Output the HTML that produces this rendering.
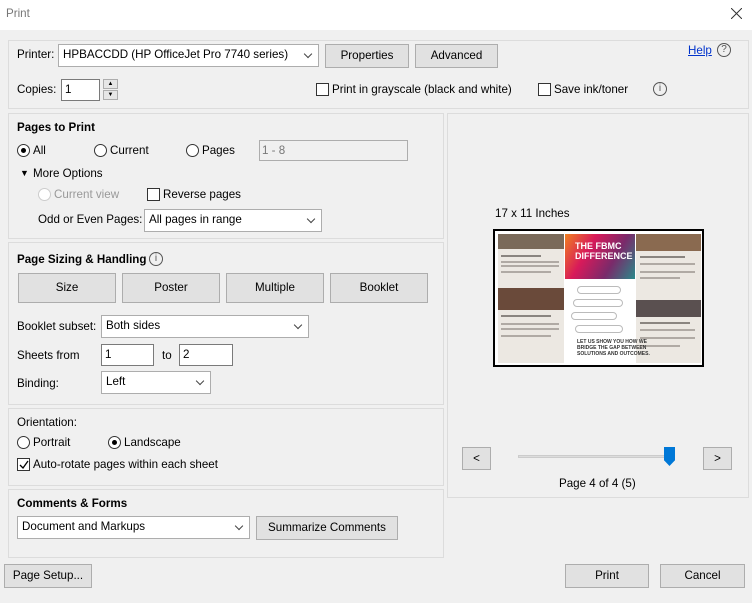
<!DOCTYPE html><html><head><style>
*{box-sizing:border-box}
body{margin:0;width:752px;height:603px;background:#f0f0f0;font-family:"Liberation Sans",Arial,sans-serif;font-size:11.6px;color:#000;position:relative;overflow:hidden}
.a{position:absolute;white-space:nowrap}
.tb{position:absolute;left:0;top:0;width:752px;height:30px;background:#fff}
.p{position:absolute;border:1px solid #dcdcdc}
.btn{position:absolute;background:#e1e1e1;border:1px solid #adadad;text-align:center;line-height:22px}
.inp{position:absolute;background:#fff;border:1px solid #7a7a7a;padding-left:3px;line-height:20px}
.sel{position:absolute;background:#fff;border:1px solid #adadad;padding-left:4px;line-height:20px}
.sel:after{content:"";position:absolute;right:7px;top:6px;width:5px;height:5px;border-right:1px solid #444;border-bottom:1px solid #444;transform:rotate(45deg)}
.cb{position:absolute;width:13px;height:13px;border:1px solid #333;background:#fff}
.rd{position:absolute;width:13px;height:13px;border:1px solid #333;border-radius:50%;background:#fff}
.rd.on:after{content:"";position:absolute;left:3px;top:3px;width:5px;height:5px;border-radius:50%;background:#000}
b{font-weight:bold}
.ln{position:absolute;height:2px;background:#8a8580}
</style></head><body>
<div class="tb"></div>
<div class="a" style="left:6px;top:7px;color:#777">Print</div>
<svg class="a" style="left:731px;top:8px" width="11" height="11"><path d="M0 0L11 11M11 0L0 11" stroke="#333" stroke-width="1"/></svg>

<div class="p" style="left:8px;top:40px;width:741px;height:69px"></div>
<div class="a" style="left:17px;top:48px">Printer:</div>
<div class="sel" style="left:58px;top:44px;width:261px;height:23px">HPBACCDD (HP OfficeJet Pro 7740 series)</div>
<div class="btn" style="left:325px;top:44px;width:84px;height:24px">Properties</div>
<div class="btn" style="left:415px;top:44px;width:83px;height:24px">Advanced</div>
<div class="a" style="left:688px;top:44px;color:#0033cc;text-decoration:underline">Help</div>
<div class="a" style="left:717px;top:43px;width:14px;height:14px;border:1px solid #555;border-radius:50%;font-size:10px;text-align:center;line-height:12px;color:#555">?</div>
<div class="a" style="left:17px;top:83px">Copies:</div>
<div class="inp" style="left:61px;top:79px;width:39px;height:22px">1</div>
<div class="a" style="left:103px;top:79px;width:15px;height:10px;border:1px solid #adadad;background:#e6e6e6;font-size:6px;text-align:center;line-height:9px">▲</div>
<div class="a" style="left:103px;top:90px;width:15px;height:10px;border:1px solid #adadad;background:#e6e6e6;font-size:6px;text-align:center;line-height:9px">▼</div>
<div class="cb" style="left:316px;top:83px"></div><div class="a" style="left:332px;top:83px">Print in grayscale (black and white)</div>
<div class="cb" style="left:538px;top:83px"></div><div class="a" style="left:554px;top:83px">Save ink/toner</div>
<div class="a" style="left:653px;top:82px;width:14px;height:14px;border:1px solid #555;border-radius:50%;font-size:10px;text-align:center;line-height:12px;color:#555">i</div>

<div class="p" style="left:8px;top:113px;width:436px;height:126px"></div>
<div class="a" style="left:17px;top:121px"><b>Pages to Print</b></div>
<div class="rd on" style="left:17px;top:144px"></div><div class="a" style="left:33px;top:144px">All</div>
<div class="rd" style="left:94px;top:144px"></div><div class="a" style="left:110px;top:144px">Current</div>
<div class="rd" style="left:186px;top:144px"></div><div class="a" style="left:202px;top:144px">Pages</div>
<div class="a" style="left:259px;top:140px;width:149px;height:21px;border:1px solid #adadad;background:#f0f0f0;color:#777;padding-left:2px;line-height:19px">1 - 8</div>
<div class="a" style="left:20px;top:168px;font-size:9px">▼</div><div class="a" style="left:33px;top:167px">More Options</div>
<div class="rd" style="left:38px;top:188px;border-color:#ccc"></div><div class="a" style="left:54px;top:188px;color:#999">Current view</div>
<div class="cb" style="left:147px;top:188px"></div><div class="a" style="left:163px;top:188px">Reverse pages</div>
<div class="a" style="left:38px;top:213px">Odd or Even Pages:</div>
<div class="sel" style="left:144px;top:209px;width:178px;height:23px">All pages in range</div>

<div class="p" style="left:8px;top:242px;width:436px;height:163px"></div>
<div class="a" style="left:17px;top:253px"><b>Page Sizing &amp; Handling</b></div>
<div class="a" style="left:149px;top:252px;width:14px;height:14px;border:1px solid #555;border-radius:50%;font-size:10px;text-align:center;line-height:12px;color:#555">i</div>
<div class="btn" style="left:18px;top:273px;width:98px;height:30px;line-height:28px">Size</div>
<div class="btn" style="left:122px;top:273px;width:98px;height:30px;line-height:28px">Poster</div>
<div class="btn" style="left:226px;top:273px;width:98px;height:30px;line-height:28px">Multiple</div>
<div class="btn" style="left:330px;top:273px;width:98px;height:30px;line-height:28px">Booklet</div>
<div class="a" style="left:17px;top:320px">Booklet subset:</div>
<div class="sel" style="left:101px;top:315px;width:208px;height:23px">Both sides</div>
<div class="a" style="left:17px;top:349px">Sheets from</div>
<div class="inp" style="left:101px;top:344px;width:53px;height:22px">1</div>
<div class="a" style="left:162px;top:349px">to</div>
<div class="inp" style="left:179px;top:344px;width:54px;height:22px">2</div>
<div class="a" style="left:17px;top:377px">Binding:</div>
<div class="sel" style="left:101px;top:371px;width:110px;height:23px">Left</div>

<div class="p" style="left:8px;top:408px;width:436px;height:78px"></div>
<div class="a" style="left:17px;top:416px">Orientation:</div>
<div class="rd" style="left:17px;top:436px"></div><div class="a" style="left:33px;top:436px">Portrait</div>
<div class="rd on" style="left:108px;top:436px"></div><div class="a" style="left:124px;top:436px">Landscape</div>
<div class="cb" style="left:17px;top:458px"></div><svg class="a" style="left:19px;top:460px" width="10" height="10"><path d="M1 5L4 8L9 1" stroke="#000" stroke-width="1.3" fill="none"/></svg><div class="a" style="left:33px;top:458px">Auto-rotate pages within each sheet</div>

<div class="p" style="left:8px;top:489px;width:436px;height:69px"></div>
<div class="a" style="left:17px;top:497px"><b>Comments &amp; Forms</b></div>
<div class="sel" style="left:17px;top:516px;width:233px;height:23px">Document and Markups</div>
<div class="btn" style="left:256px;top:516px;width:142px;height:24px">Summarize Comments</div>

<div class="p" style="left:447px;top:113px;width:302px;height:385px"></div>
<div class="a" style="left:495px;top:207px">17 x 11 Inches</div>
<div class="a" style="left:493px;top:229px;width:211px;height:138px;border:2px solid #000;background:#fff;padding:2px">
 <div style="position:absolute;left:3px;top:3px;width:66px;height:129px;background:#ece8e2"></div>
 <div style="position:absolute;left:3px;top:3px;width:66px;height:15px;background:#7a6a5a"></div>
 <div style="position:absolute;left:3px;top:57px;width:66px;height:22px;background:#6a4a3a"></div>
 <div class="ln" style="left:6px;top:24px;width:40px"></div><div class="ln" style="left:6px;top:30px;width:58px;background:#b0aaa4"></div><div class="ln" style="left:6px;top:34px;width:58px;background:#b0aaa4"></div><div class="ln" style="left:6px;top:40px;width:50px;background:#b0aaa4"></div>
 <div class="ln" style="left:6px;top:84px;width:50px"></div><div class="ln" style="left:6px;top:92px;width:58px;background:#b0aaa4"></div><div class="ln" style="left:6px;top:97px;width:58px;background:#b0aaa4"></div><div class="ln" style="left:6px;top:104px;width:50px;background:#b0aaa4"></div>
 <div style="position:absolute;left:70px;top:3px;width:70px;height:45px;background:linear-gradient(120deg,#f08020,#d81a5a,#7a2a6a,#2a8a8a)"></div>
 <div style="position:absolute;left:80px;top:10px;color:#fff;font-size:9px;font-weight:bold;line-height:10px">THE FBMC<br>DIFFERENCE</div>
 <div style="position:absolute;left:82px;top:55px;width:44px;height:8px;border:1px solid #bbb;border-radius:4px"></div>
 <div style="position:absolute;left:78px;top:68px;width:50px;height:8px;border:1px solid #bbb;border-radius:4px"></div>
 <div style="position:absolute;left:76px;top:81px;width:46px;height:8px;border:1px solid #bbb;border-radius:4px"></div>
 <div style="position:absolute;left:80px;top:94px;width:48px;height:8px;border:1px solid #bbb;border-radius:4px"></div>
 <div style="position:absolute;left:141px;top:3px;width:65px;height:129px;background:#ece8e2"></div>
 <div style="position:absolute;left:141px;top:3px;width:65px;height:17px;background:#8a6a50"></div>
 <div style="position:absolute;left:141px;top:69px;width:65px;height:17px;background:#5a5050"></div>
 <div class="ln" style="left:145px;top:25px;width:45px"></div><div class="ln" style="left:145px;top:32px;width:55px;background:#b0aaa4"></div><div class="ln" style="left:145px;top:40px;width:55px;background:#b0aaa4"></div><div class="ln" style="left:145px;top:46px;width:40px;background:#b0aaa4"></div>
 <div class="ln" style="left:145px;top:91px;width:50px"></div><div class="ln" style="left:145px;top:98px;width:55px;background:#b0aaa4"></div><div class="ln" style="left:145px;top:106px;width:55px;background:#b0aaa4"></div><div class="ln" style="left:145px;top:114px;width:40px;background:#b0aaa4"></div>
 <div style="position:absolute;left:82px;top:108px;font-size:5px;font-weight:bold;line-height:6px;color:#333">LET US SHOW YOU HOW WE<br>BRIDGE THE GAP BETWEEN<br>SOLUTIONS AND OUTCOMES.</div>
</div>
<div class="btn" style="left:462px;top:447px;width:29px;height:23px;line-height:21px">&lt;</div>
<div class="a" style="left:518px;top:455px;width:157px;height:3px;background:#ddd;border:1px solid #ccc"></div>
<div class="a" style="left:664px;top:447px;width:11px;height:19px;background:#0078d7;clip-path:polygon(0 0,100% 0,100% 70%,50% 100%,0 70%)"></div>
<div class="btn" style="left:703px;top:447px;width:29px;height:23px;line-height:21px">&gt;</div>
<div class="a" style="left:559px;top:477px">Page 4 of 4 (5)</div>

<div class="btn" style="left:4px;top:564px;width:88px;height:24px">Page Setup...</div>
<div class="btn" style="left:565px;top:564px;width:84px;height:24px">Print</div>
<div class="btn" style="left:660px;top:564px;width:85px;height:24px">Cancel</div>
</body></html>
